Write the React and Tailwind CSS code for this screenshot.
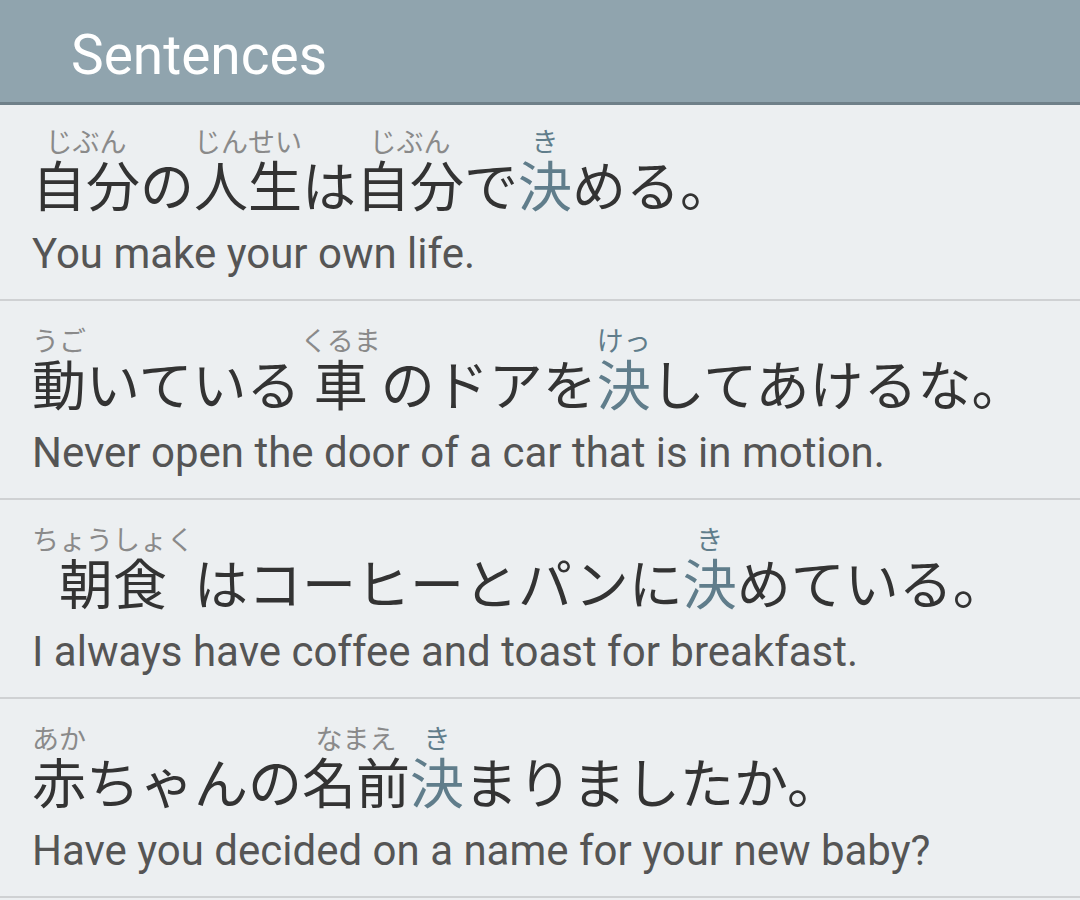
import React from "react";

const rows = [
  {
    jp: [
      { r: "じぶん", b: "自分" },
      "の",
      { r: "じんせい", b: "人生" },
      "は",
      { r: "じぶん", b: "自分" },
      "で",
      { r: "き", b: "決", hl: true },
      "める。",
    ],
    en: "You make your own life.",
  },
  {
    jp: [
      { r: "うご", b: "動" },
      "いている",
      { r: "くるま", b: "車" },
      "のドアを",
      { r: "けっ", b: "決", hl: true },
      "してあけるな。",
    ],
    en: "Never open the door of a car that is in motion.",
  },
  {
    jp: [
      { r: "ちょうしょく", b: "朝食" },
      "はコーヒーとパンに",
      { r: "き", b: "決", hl: true },
      "めている。",
    ],
    en: "I always have coffee and toast for breakfast.",
  },
  {
    jp: [
      { r: "あか", b: "赤" },
      "ちゃんの",
      { r: "なまえ", b: "名前" },
      { r: "き", b: "決", hl: true },
      "まりましたか。",
    ],
    en: "Have you decided on a name for your new baby?",
  },
];

const jpFont = { fontFamily: '"Noto Sans CJK JP", "Noto Sans", sans-serif' };
const enFont = { fontFamily: 'Roboto, "Liberation Sans", sans-serif' };

function Sentence({ parts }) {
  return (
    <div
      className="flex items-end whitespace-nowrap text-[54px] leading-[58px] text-[#333333]"
      style={jpFont}
    >
      {parts.map((p, i) =>
        typeof p === "string" ? (
          <span key={i}>{p}</span>
        ) : (
          <span key={i} className="flex flex-col items-center">
            <span
              className={
                "text-[27px] leading-[28px] " +
                (p.hl ? "text-[#607d8b]" : "text-[#8a8a8a]")
              }
            >
              {p.r}
            </span>
            <span className={p.hl ? "text-[#607d8b]" : ""}>{p.b}</span>
          </span>
        )
      )}
    </div>
  );
}

export default function App() {
  return (
    <div className="w-[1080px] h-[900px] overflow-hidden bg-[#eceff1]">
      <div className="h-[105px] bg-[#90a4ae] border-b-[3px] border-[#6f8089] pl-[71px]">
        <div className="pt-[23px] text-[55px] leading-[64px] text-white" style={enFont}>
          Sentences
        </div>
      </div>
      {rows.map((row, i) => (
        <div
          key={i}
          className={
            i === 0
              ? "h-[196px] border-b-2 border-[#cfd1d3] px-8 pt-[22px]"
              : "h-[199px] border-b-2 border-[#cfd1d3] px-8 pt-[25px]"
          }
        >
          <Sentence parts={row.jp} />
          <div className="mt-[16px] text-[42px] leading-[50px] text-[#555555]" style={enFont}>
            {row.en}
          </div>
        </div>
      ))}
    </div>
  );
}
